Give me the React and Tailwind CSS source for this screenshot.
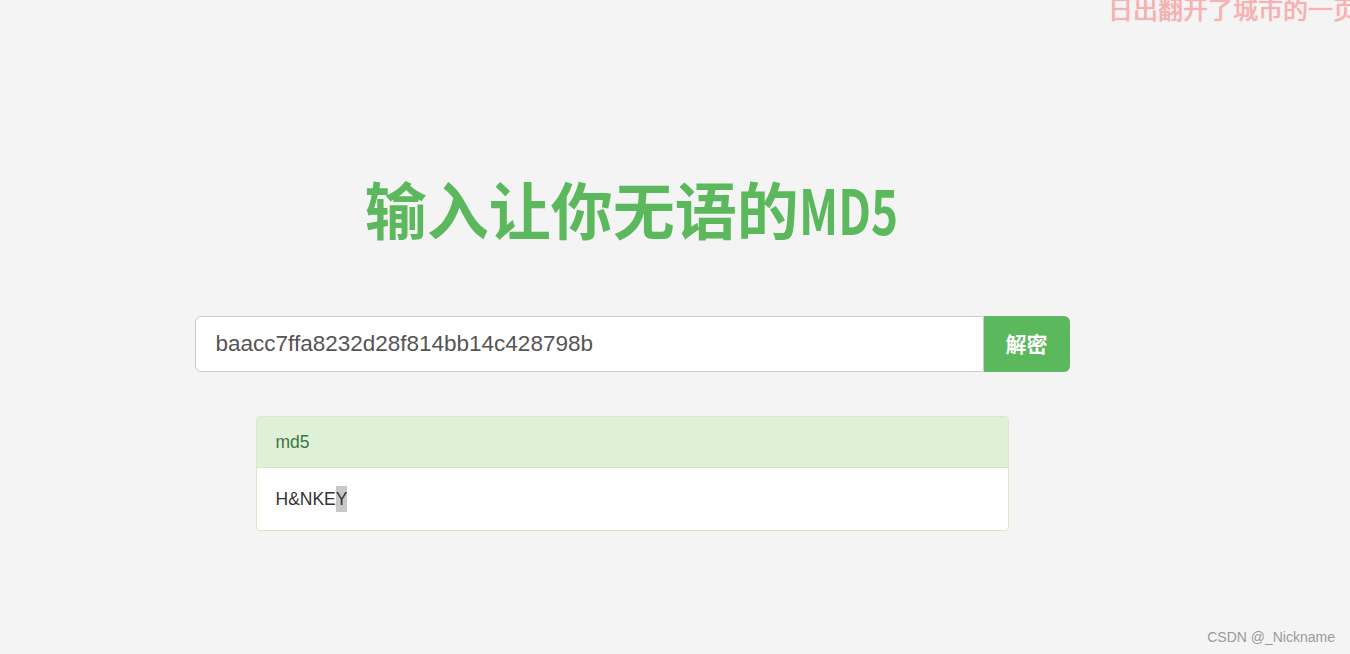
export default function App() {
  return (
    <div className="relative min-h-[654px] w-[1350px] overflow-hidden bg-[#f4f4f4]" style={{ fontFamily: '"Liberation Sans", "Noto Sans CJK SC", sans-serif' }}>
      <div className="absolute left-[1108px] top-[-9px] whitespace-nowrap text-[25px] leading-[34px] text-[#f7b3b3]" style={{ fontFamily: '"Noto Sans CJK SC", sans-serif', textShadow: '0 0 1px #ee8f8f' }}>
        日出翻开了城市的一页
      </div>
      <div className="flex w-[1264px] flex-col items-center pt-[168px]">
        <h1 className="text-[62px] font-bold leading-[80px] text-[#5cb85c]" style={{ fontFamily: '"Noto Sans CJK SC", sans-serif' }}>
          输入让你无语的<span className="mr-[-33px] inline-block origin-left scale-x-[0.74]">MD5</span>
        </h1>
        <div className="mt-[68px] flex w-[875px]">
          <div className="flex h-[56px] flex-1 items-center rounded-l-[6px] border border-[#cccccc] bg-white pl-[20px] text-[22.5px] text-[#555555]">
            baacc7ffa8232d28f814bb14c428798b
          </div>
          <button className="h-[56px] w-[86px] rounded-r-[6px] bg-[#5cb85c] text-[21px] font-bold text-white" style={{ fontFamily: '"Noto Sans CJK SC", sans-serif' }}>
            解密
          </button>
        </div>
        <div className="mt-[44px] w-[753px] overflow-hidden rounded-[4px] border border-[#d6e9c6] bg-white">
          <div className="flex h-[51px] items-center border-b border-[#d6e9c6] bg-[#dff0d8] pl-[19px] text-[17.5px] text-[#3c763d]">
            md5
          </div>
          <div className="flex h-[62px] items-center pl-[19px] text-[17.5px] text-[#333333]">
            <span>H&amp;NKE</span><span className="bg-[#c8c8c8]">Y</span>
          </div>
        </div>
      </div>
      <div className="absolute bottom-[6px] right-[15px] text-[14px] text-[#9a9a9a]">
        CSDN @_Nickname
      </div>
    </div>
  );
}
